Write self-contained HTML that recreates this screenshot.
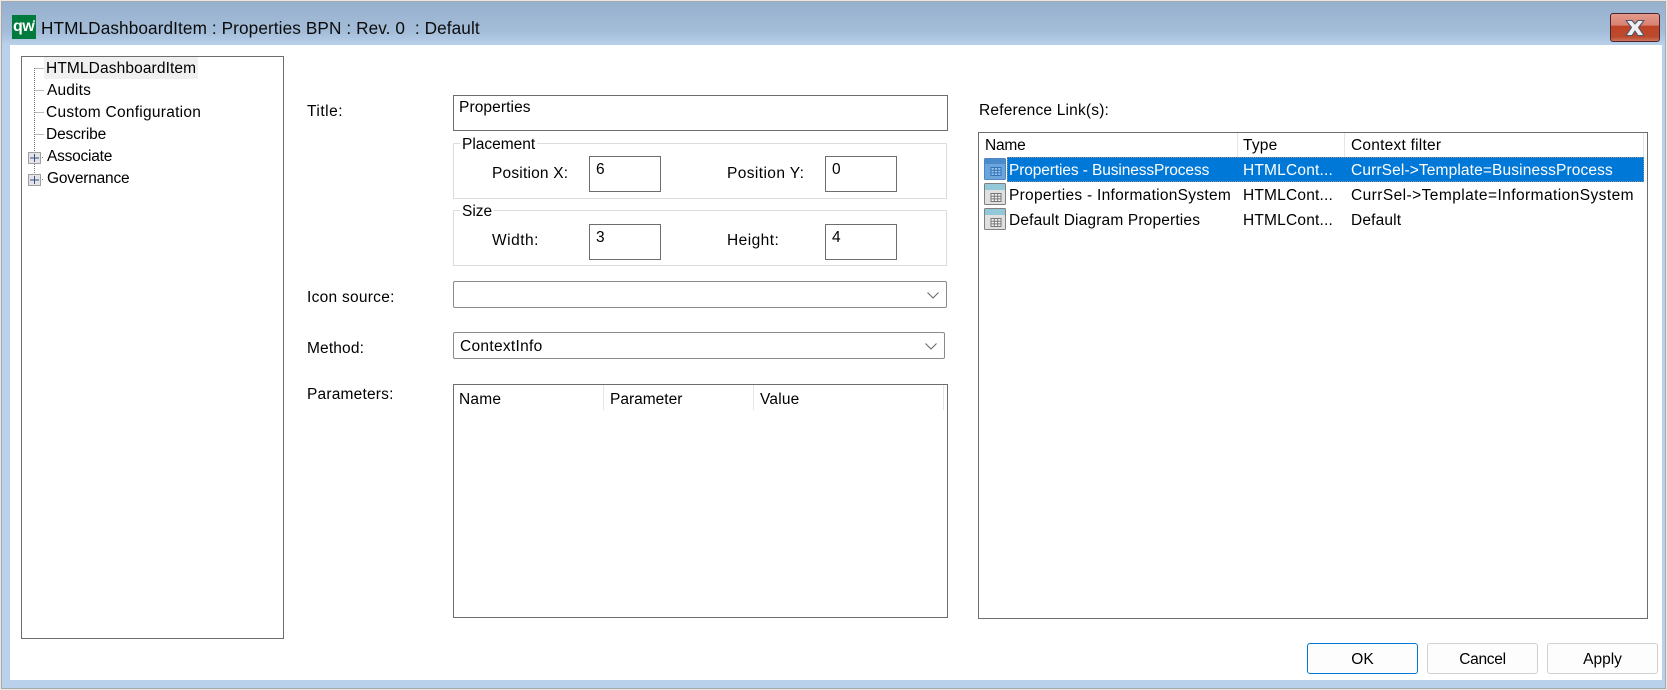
<!DOCTYPE html>
<html><head><meta charset="utf-8"><style>
html,body{margin:0;padding:0;background:#fff}
#w{position:relative;width:1667px;height:690px;overflow:hidden;background:#b9d1ea;font-family:"Liberation Sans",sans-serif;font-size:15.5px;color:#000}
#w div{position:absolute;box-sizing:border-box}
.t{white-space:pre;line-height:20px;height:20px}
.b{border:1px solid #6d6d6d;background:#fff}
.g{border:1px solid #dcdcdc;background:#fff}
.c{border:1px solid #8a8a8a;border-radius:2px;background:#fff}
.s{background:#e5e5e5;width:1px}
.btn{background:#fdfdfd;border:1px solid #d0d0d0;border-radius:3px;text-align:center;line-height:31px}
svg{position:absolute;display:block}
</style></head><body><div id="w">
<div style="left:0;top:0;width:1667px;height:45px;background:linear-gradient(#94afcd 0,#a0b9d5 50%,#a3bcd8 70%,#b9d1ea 100%)"></div>
<div style="left:1px;top:1px;width:1665px;height:1px;background:#a8a8a8"></div>
<div style="left:1px;top:1px;width:1px;height:688px;background:#a8a8a8"></div>
<div style="left:1665px;top:1px;width:1px;height:688px;background:#a8a8a8"></div>
<div style="left:1px;top:688px;width:1665px;height:1px;background:#a8a8a8"></div>
<div style="left:0;top:689px;width:1667px;height:1px;background:#e8e8e8"></div>
<div style="left:0;top:0;width:1px;height:690px;background:#e8e8e8"></div>
<div style="left:1666px;top:0;width:1px;height:690px;background:#e8e8e8"></div>
<div style="left:0;top:0;width:1667px;height:1px;background:#e8e8e8"></div>

<div style="left:10px;top:45px;width:1652px;height:635px;background:#fff"></div>

<div style="left:12px;top:15px;width:24px;height:24px;background:#007a3d"></div>
<div class="t" style="left:13px;top:17px;color:#fff;font-weight:bold;font-size:16px;letter-spacing:-.5px;line-height:20px">qw</div>
<div style="left:33px;top:20px;width:2px;height:2px;background:#e4f2ea;border-radius:1px"></div>
<div class="t" style="left:41px;top:18px;font-size:17.2px;letter-spacing:.1px;color:#0c0c0c">HTMLDashboardItem : Properties BPN : Rev. 0  : Default</div>

<div style="left:1610px;top:13px;width:50px;height:29px;border:1px solid #4a2530;border-radius:3px;background:linear-gradient(#e39a8b 0,#d98272 42%,#bf4327 44%,#bc4a2c 85%,#cf7560 100%)"></div>
<svg style="left:1610px;top:13px" width="50" height="29" viewBox="0 0 50 29"><path d="M16 7.500h6l3 3.500 3-3.500h6l-5.500 7 5.500 8h-6l-3-4.500-3 4.500h-6l5.500-8z" fill="#efefef" stroke="#4d5670" stroke-width="1.1" stroke-linejoin="round"/></svg>

<!-- tree -->
<div class="b" style="left:21px;top:56px;width:263px;height:583px"></div>
<div style="left:44px;top:57px;width:154px;height:22px;background:#f0f0f0"></div>
<svg style="left:26px;top:60px" width="20" height="130" viewBox="0 0 20 130"><path d="M8.500 8V92M8.500 8.500H18M8.500 30.500H18M8.500 52.500H18M8.500 74.500H18M14 97.500H18M8.500 104V114M14 119.500H18" stroke="#777" stroke-width="1" stroke-dasharray="1 1" fill="none"/>
<rect x="2.500" y="92.500" width="12" height="11" fill="#e3e3e8" stroke="#a0a0a0"/><path d="M4 98H13M8.500 94V102" stroke="#35507e"/>
<rect x="2.500" y="114.500" width="12" height="11" fill="#e3e3e8" stroke="#a0a0a0"/><path d="M4 120H13M8.500 116V124" stroke="#35507e"/></svg>
<div class="t" style="left:46px;top:59px;letter-spacing:.12px">HTMLDashboardItem</div>
<div class="t" style="left:47px;top:81px;letter-spacing:.15px">Audits</div>
<div class="t" style="left:46px;top:103px;letter-spacing:.26px">Custom Configuration</div>
<div class="t" style="left:46px;top:125px;letter-spacing:-.13px">Describe</div>
<div class="t" style="left:47px;top:147px;letter-spacing:-.23px">Associate</div>
<div class="t" style="left:47px;top:169px;letter-spacing:-.2px">Governance</div>

<!-- form -->
<div class="t" style="left:307px;top:102px;letter-spacing:.5px">Title:</div>
<div class="b" style="left:453px;top:95px;width:495px;height:36px"></div>
<div class="t" style="left:459px;top:98px;letter-spacing:.1px">Properties</div>

<div class="g" style="left:453px;top:143px;width:494px;height:56px"></div>
<div class="t" style="left:460px;top:135px;background:#fff;padding:0 2px">Placement</div>
<div class="t" style="left:492px;top:164px;letter-spacing:.2px">Position X:</div>
<div class="b" style="left:589px;top:156px;width:72px;height:36px"></div>
<div class="t" style="left:596px;top:160px">6</div>
<div class="t" style="left:727px;top:164px;letter-spacing:.4px">Position Y:</div>
<div class="b" style="left:825px;top:156px;width:72px;height:36px"></div>
<div class="t" style="left:832px;top:160px">0</div>

<div class="g" style="left:453px;top:210px;width:494px;height:56px"></div>
<div class="t" style="left:460px;top:202px;background:#fff;padding:0 2px">Size</div>
<div class="t" style="left:492px;top:231px;letter-spacing:.5px">Width:</div>
<div class="b" style="left:589px;top:224px;width:72px;height:36px"></div>
<div class="t" style="left:596px;top:228px">3</div>
<div class="t" style="left:727px;top:231px;letter-spacing:.45px">Height:</div>
<div class="b" style="left:825px;top:224px;width:72px;height:36px"></div>
<div class="t" style="left:832px;top:228px">4</div>

<div class="t" style="left:307px;top:288px;letter-spacing:.27px">Icon source:</div>
<div class="c" style="left:453px;top:281px;width:494px;height:27px"></div>
<svg style="left:926px;top:291px" width="14" height="9"><path d="M1.500 1.500L7 7l5.500-5.500" stroke="#666" fill="none"/></svg>

<div class="t" style="left:307px;top:339px;letter-spacing:.15px">Method:</div>
<div class="c" style="left:453px;top:332px;width:492px;height:27px"></div>
<div class="t" style="left:460px;top:337px;letter-spacing:.3px">ContextInfo</div>
<svg style="left:924px;top:342px" width="14" height="9"><path d="M1.500 1.500L7 7l5.500-5.500" stroke="#666" fill="none"/></svg>

<div class="t" style="left:307px;top:385px;letter-spacing:.2px">Parameters:</div>
<div class="b" style="left:453px;top:384px;width:495px;height:234px"></div>
<div class="s" style="left:603px;top:385px;height:25px"></div>
<div class="s" style="left:753px;top:385px;height:25px"></div>
<div class="s" style="left:943px;top:385px;height:25px"></div>
<div class="t" style="left:459px;top:390px;letter-spacing:.2px">Name</div>
<div class="t" style="left:610px;top:390px">Parameter</div>
<div class="t" style="left:760px;top:390px;letter-spacing:.2px">Value</div>

<!-- right -->
<div class="t" style="left:979px;top:101px;letter-spacing:.19px">Reference Link(s):</div>
<div class="b" style="left:978px;top:132px;width:670px;height:487px"></div>
<div class="s" style="left:1237px;top:133px;height:24px"></div>
<div class="s" style="left:1344px;top:133px;height:24px"></div>
<div class="s" style="left:1643px;top:133px;height:24px"></div>
<div class="t" style="left:985px;top:136px;letter-spacing:-.2px">Name</div>
<div class="t" style="left:1243px;top:136px;letter-spacing:.2px">Type</div>
<div class="t" style="left:1351px;top:136px;letter-spacing:.23px">Context filter</div>

<div style="left:1007px;top:157px;width:637px;height:25px;background:#0078d7;border:1px dotted #8a8f90"></div>

<svg style="left:984px;top:158px" width="22" height="22" viewBox="0 0 22 22"><rect x=".5" y=".5" width="21" height="21" rx="1" fill="#6ba5dc" stroke="#4f86bd"/><rect x="1" y="1" width="20" height="5" fill="#4a8ccb"/><path d="M7 9.500h10v8H7zM10.300 9.500v8M13.700 9.500v8M7 12.200h10M7 14.900h10" stroke="#2e74b8" fill="#9cc4ea"/></svg>
<svg style="left:984px;top:183px" width="22" height="22" viewBox="0 0 22 22"><rect x=".5" y=".5" width="21" height="21" rx="1" fill="#e0e0e0" stroke="#808080"/><rect x="1" y="1" width="20" height="6" fill="#92c8d8"/><path d="M7 10.500h10v8H7zM10.300 10.500v8M13.700 10.500v8M7 13.200h10M7 15.900h10" stroke="#777" fill="#f4f4f4"/></svg>
<svg style="left:984px;top:208px" width="22" height="22" viewBox="0 0 22 22"><rect x=".5" y=".5" width="21" height="21" rx="1" fill="#e0e0e0" stroke="#808080"/><rect x="1" y="1" width="20" height="6" fill="#92c8d8"/><path d="M7 10.500h10v8H7zM10.300 10.500v8M13.700 10.500v8M7 13.200h10M7 15.900h10" stroke="#777" fill="#f4f4f4"/></svg>

<div class="t" style="left:1009px;top:161px;color:#fff;letter-spacing:-.11px">Properties - BusinessProcess</div>
<div class="t" style="left:1243px;top:161px;color:#fff;letter-spacing:.2px">HTMLCont...</div>
<div class="t" style="left:1351px;top:161px;color:#fff;letter-spacing:.13px">CurrSel-&gt;Template=BusinessProcess</div>
<div class="t" style="left:1009px;top:186px;letter-spacing:.28px">Properties - InformationSystem</div>
<div class="t" style="left:1243px;top:186px;letter-spacing:.2px">HTMLCont...</div>
<div class="t" style="left:1351px;top:186px;letter-spacing:.43px">CurrSel-&gt;Template=InformationSystem</div>
<div class="t" style="left:1009px;top:211px;letter-spacing:.16px">Default Diagram Properties</div>
<div class="t" style="left:1243px;top:211px;letter-spacing:.2px">HTMLCont...</div>
<div class="t" style="left:1351px;top:211px;letter-spacing:.15px">Default</div>

<div class="btn" style="left:1307px;top:643px;width:111px;height:31px;border-color:#0078d7">OK</div>
<div class="btn" style="left:1427px;top:643px;width:111px;height:31px;letter-spacing:-.3px">Cancel</div>
<div class="btn" style="left:1547px;top:643px;width:111px;height:31px">Apply</div>
</div></body></html>
